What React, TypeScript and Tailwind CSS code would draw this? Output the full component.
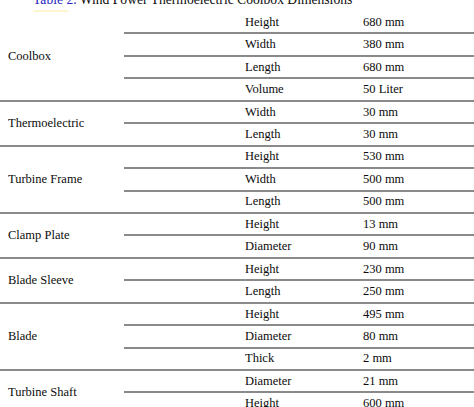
const groups: { name: string; rows: [string, string][] }[] = [
  {
    name: 'Coolbox',
    rows: [
      ['Height', '680 mm'],
      ['Width', '380 mm'],
      ['Length', '680 mm'],
      ['Volume', '50 Liter'],
    ],
  },
  {
    name: 'Thermoelectric',
    rows: [
      ['Width', '30 mm'],
      ['Length', '30 mm'],
    ],
  },
  {
    name: 'Turbine Frame',
    rows: [
      ['Height', '530 mm'],
      ['Width', '500 mm'],
      ['Length', '500 mm'],
    ],
  },
  {
    name: 'Clamp Plate',
    rows: [
      ['Height', '13 mm'],
      ['Diameter', '90 mm'],
    ],
  },
  {
    name: 'Blade Sleeve',
    rows: [
      ['Height', '230 mm'],
      ['Length', '250 mm'],
    ],
  },
  {
    name: 'Blade',
    rows: [
      ['Height', '495 mm'],
      ['Diameter', '80 mm'],
      ['Thick', '2 mm'],
    ],
  },
  {
    name: 'Turbine Shaft',
    rows: [
      ['Diameter', '21 mm'],
      ['Height', '600 mm'],
    ],
  },
];

export default function App() {
  return (
    <div className="w-[474px] h-[407px] overflow-hidden bg-white text-[#0c0c0c] font-['Liberation_Serif',serif]">
      {/* Caption, clipped at the top edge */}
      <div className="relative h-[12px] overflow-hidden">
        <p className="ml-[33px] -mt-[7px] text-[13.6px] leading-[14px] whitespace-nowrap">
          <span className="text-[#2727c0]">Table 2.</span> Wind Power Thermoelectric Coolbox Dimensions
        </p>
        <div className="absolute left-[33px] top-[10px] h-[4px] w-[36px] rounded-sm bg-[#fbf6cf]" />
      </div>

      <div className="text-[12.5px]">
        {groups.map((g) => (
          <div key={g.name} className="flex">
            <div
              className="flex w-[124px] shrink-0 items-center border-b-2 border-[#8a8a8a] pl-[8px]"
              style={{ height: `${g.rows.length * 22.44}px` }}
            >
              {g.name}
            </div>
            <div className="flex-1">
              {g.rows.map(([param, value]) => (
                <div key={param} className="flex h-[22.44px] items-center border-b-2 border-[#8a8a8a]">
                  <span className="w-[239px] pl-[121px]">{param}</span>
                  <span>{value}</span>
                </div>
              ))}
            </div>
          </div>
        ))}
      </div>
    </div>
  );
}
